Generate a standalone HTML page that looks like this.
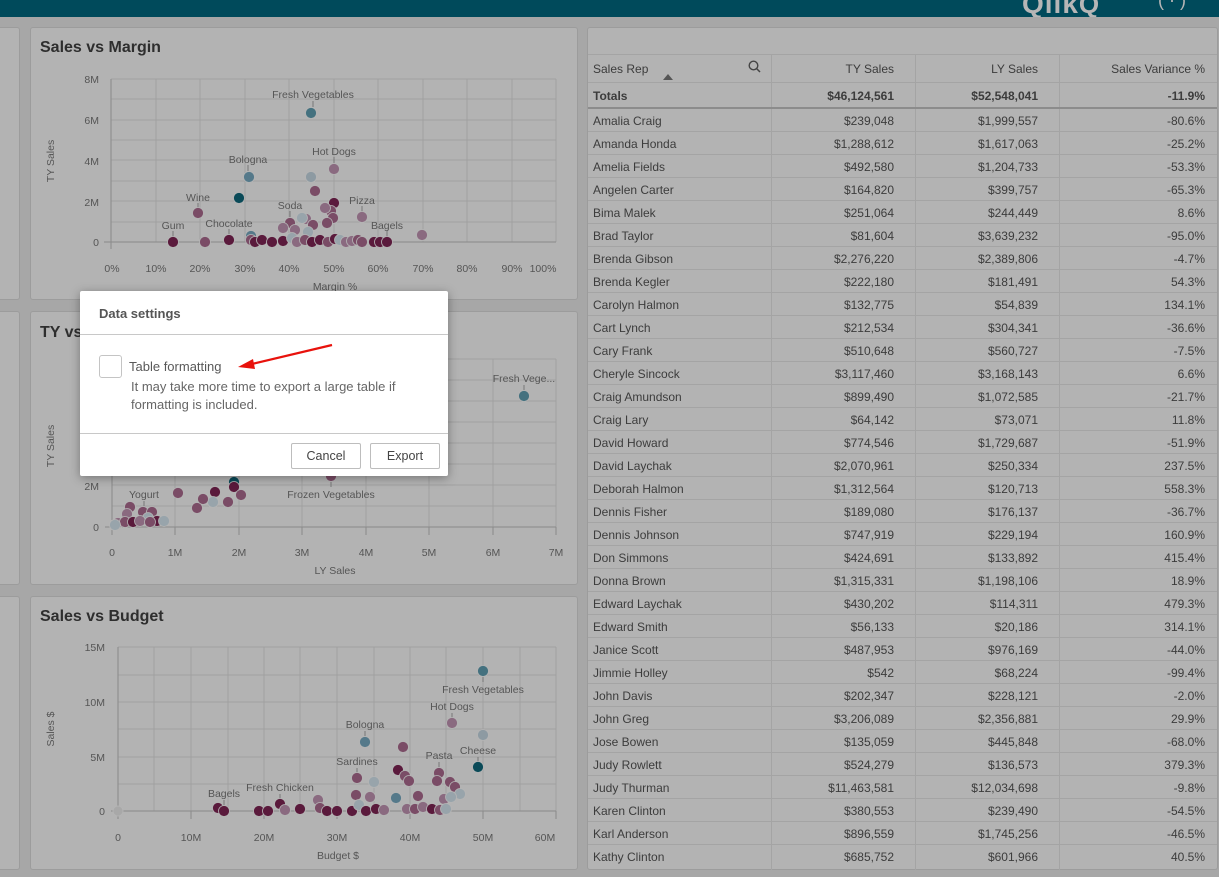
<!DOCTYPE html>
<html><head><meta charset="utf-8"><style>
*{margin:0;padding:0;box-sizing:border-box}
body{width:1219px;height:877px;overflow:hidden;background:#a7a7a7;font-family:"Liberation Sans",sans-serif;position:relative;color:#3a3a3a}
.bar{position:absolute;left:0;top:0;width:1219px;height:17px;background:#004a5b;overflow:hidden}
.card{position:absolute;background:#b3b3b3;border:1px solid #9c9c9c;border-radius:3px}
.title{position:absolute;font-weight:bold;font-size:16px;color:#2e2e2e}
svg text{font-family:"Liberation Sans",sans-serif}
.tbl{position:absolute;left:588px;top:55px;width:629px;font-size:12px;color:#3c3c3c}
.row{position:absolute;left:0;width:629px;height:23px;border-bottom:1px solid #a4a4a4}
.row span{position:absolute;top:5px}
.c1{left:5px}.c2{right:323px}.c3{right:179px}.c4{right:12px}
.vl{position:absolute;top:0;width:1px;background:#a4a4a4;height:815px}
.modal{position:absolute;left:80px;top:291px;width:368px;height:185px;background:#fff;border-radius:2px;box-shadow:0 2px 10px rgba(0,0,0,.35)}
.btn{position:absolute;top:152px;height:26px;border:1px solid #bdbdbd;border-radius:2px;font-size:12.5px;color:#444;text-align:center;line-height:24px;background:#fff}
</style></head><body>
<div class="bar"><div style="position:absolute;left:1022px;top:-12px;font-size:28px;font-weight:bold;color:#b6b6b6;letter-spacing:1px">Qlik<span style="font-size:26px">Q</span></div><div style="position:absolute;left:1158px;top:-10px;font-size:18px;color:#b6b6b6">( · )</div></div>

<div class="card" style="left:-6px;top:27px;width:26px;height:273px"></div>
<div class="card" style="left:-6px;top:311px;width:26px;height:274px"></div>
<div class="card" style="left:-6px;top:596px;width:26px;height:274px"></div>

<!-- Chart 1 -->
<div class="card" style="left:30px;top:27px;width:548px;height:273px"></div>
<div class="title" style="left:40px;top:39px">Sales vs Margin</div>
<svg style="position:absolute;left:0;top:0" width="590" height="300" font-size="10.5" fill="#555">
<g stroke="#a0a0a0" stroke-width="1">
<line x1="111" y1="79" x2="556" y2="79"/><line x1="111" y1="99" x2="556" y2="99"/><line x1="111" y1="120" x2="556" y2="120"/><line x1="111" y1="140" x2="556" y2="140"/><line x1="111" y1="160" x2="556" y2="160"/><line x1="111" y1="181" x2="556" y2="181"/><line x1="111" y1="201" x2="556" y2="201"/><line x1="111" y1="222" x2="556" y2="222"/>
<line x1="156" y1="79" x2="156" y2="242"/><line x1="200" y1="79" x2="200" y2="242"/><line x1="245" y1="79" x2="245" y2="242"/><line x1="289" y1="79" x2="289" y2="242"/><line x1="334" y1="79" x2="334" y2="242"/><line x1="378" y1="79" x2="378" y2="242"/><line x1="423" y1="79" x2="423" y2="242"/><line x1="467" y1="79" x2="467" y2="242"/><line x1="512" y1="79" x2="512" y2="242"/><line x1="556" y1="79" x2="556" y2="242"/>
</g>
<g stroke="#8a8a8a"><line x1="111" y1="79" x2="111" y2="249"/><line x1="104" y1="242" x2="556" y2="242"/></g>
<g text-anchor="end"><text x="99" y="83">8M</text><text x="99" y="124">6M</text><text x="99" y="165">4M</text><text x="99" y="206">2M</text><text x="99" y="246">0</text></g>
<g text-anchor="middle"><text x="112" y="272">0%</text><text x="156" y="272">10%</text><text x="200" y="272">20%</text><text x="245" y="272">30%</text><text x="289" y="272">40%</text><text x="334" y="272">50%</text><text x="378" y="272">60%</text><text x="423" y="272">70%</text><text x="467" y="272">80%</text><text x="512" y="272">90%</text><text x="543" y="272">100%</text>
<text x="335" y="290">Margin %</text>
<text x="313" y="98">Fresh Vegetables</text><text x="248" y="163">Bologna</text><text x="334" y="155">Hot Dogs</text><text x="198" y="201">Wine</text><text x="290" y="209">Soda</text><text x="362" y="204">Pizza</text><text x="173" y="229">Gum</text><text x="229" y="227">Chocolate</text><text x="387" y="229">Bagels</text></g>
<text transform="translate(54,161) rotate(-90)" text-anchor="middle">TY Sales</text>
<g stroke="#777"><line x1="313" y1="101" x2="313" y2="107"/><line x1="248" y1="165" x2="248" y2="171"/><line x1="334" y1="157" x2="334" y2="163"/><line x1="198" y1="203" x2="198" y2="208"/><line x1="290" y1="211" x2="290" y2="217"/><line x1="362" y1="206" x2="362" y2="212"/><line x1="173" y1="231" x2="173" y2="237"/><line x1="229" y1="229" x2="229" y2="234"/><line x1="387" y1="231" x2="387" y2="237"/></g>
<g stroke="#b5b5b5" stroke-width="0.8">
<circle cx="311" cy="113" r="5.5" fill="#44717f"/><circle cx="249" cy="177" r="5.5" fill="#55798a"/><circle cx="239" cy="198" r="5.5" fill="#0a4a58"/><circle cx="334" cy="169" r="5.5" fill="#8a6a80"/><circle cx="311" cy="177" r="5.5" fill="#8d9aa2"/><circle cx="315" cy="191" r="5.5" fill="#7a4c66"/><circle cx="198" cy="213" r="5.5" fill="#7a4c66"/><circle cx="362" cy="217" r="5.5" fill="#8a6a80"/><circle cx="334" cy="203" r="5.5" fill="#5a1a3c"/><circle cx="331" cy="211" r="5.5" fill="#7a4c66"/><circle cx="325" cy="208" r="5.5" fill="#8a6a80"/><circle cx="333" cy="218" r="5.5" fill="#7a4c66"/><circle cx="327" cy="223" r="5.5" fill="#7a4c66"/>
<circle cx="290" cy="223" r="5.5" fill="#7a4c66"/><circle cx="306" cy="219" r="5.5" fill="#8a6a80"/><circle cx="302" cy="218" r="5.5" fill="#98a4ab"/><circle cx="283" cy="228" r="5.5" fill="#8a6a80"/><circle cx="295" cy="230" r="5.5" fill="#8a6a80"/><circle cx="313" cy="225" r="5.5" fill="#7a4c66"/><circle cx="308" cy="232" r="5.5" fill="#98a4ab"/><circle cx="422" cy="235" r="5.5" fill="#8a6a80"/>
<circle cx="173" cy="242" r="5.5" fill="#5a1a3c"/><circle cx="205" cy="242" r="5.5" fill="#7a4c66"/><circle cx="229" cy="240" r="5.5" fill="#5a1a3c"/><circle cx="251" cy="236" r="5.5" fill="#55798a"/><circle cx="251" cy="240" r="5.5" fill="#7a4c66"/><circle cx="255" cy="242" r="5.5" fill="#5a1a3c"/><circle cx="262" cy="240" r="5.5" fill="#5a1a3c"/><circle cx="272" cy="242" r="5.5" fill="#5a1a3c"/><circle cx="283" cy="241" r="5.5" fill="#5a1a3c"/><circle cx="292" cy="238" r="5.5" fill="#98a4ab"/><circle cx="297" cy="242" r="5.5" fill="#8a6a80"/><circle cx="305" cy="240" r="5.5" fill="#7a4c66"/><circle cx="312" cy="242" r="5.5" fill="#5a1a3c"/><circle cx="320" cy="240" r="5.5" fill="#5a1a3c"/><circle cx="328" cy="242" r="5.5" fill="#7a4c66"/><circle cx="335" cy="239" r="5.5" fill="#5a1a3c"/><circle cx="340" cy="240" r="5.5" fill="#98a4ab"/><circle cx="346" cy="242" r="5.5" fill="#8a6a80"/><circle cx="352" cy="241" r="5.5" fill="#8a6a80"/><circle cx="358" cy="240" r="5.5" fill="#7a4c66"/><circle cx="362" cy="242" r="5.5" fill="#7a4c66"/><circle cx="374" cy="242" r="5.5" fill="#5a1a3c"/><circle cx="380" cy="242" r="5.5" fill="#5a1a3c"/><circle cx="387" cy="242" r="5.5" fill="#5a1a3c"/>
</g></svg>

<!-- Chart 2 -->
<div class="card" style="left:30px;top:311px;width:548px;height:274px"></div>
<div class="title" style="left:40px;top:324px">TY vs LY Sales</div>
<svg style="position:absolute;left:0;top:300px" width="590" height="290" font-size="10.5" fill="#555">
<g stroke="#a0a0a0"><line x1="112" y1="59" x2="556" y2="59"/><line x1="112" y1="80" x2="556" y2="80"/><line x1="112" y1="101" x2="556" y2="101"/><line x1="112" y1="122" x2="556" y2="122"/><line x1="112" y1="143" x2="556" y2="143"/><line x1="112" y1="164" x2="556" y2="164"/><line x1="112" y1="185" x2="556" y2="185"/><line x1="112" y1="206" x2="556" y2="206"/>
<line x1="175" y1="59" x2="175" y2="227"/><line x1="239" y1="59" x2="239" y2="227"/><line x1="302" y1="59" x2="302" y2="227"/><line x1="366" y1="59" x2="366" y2="227"/><line x1="429" y1="59" x2="429" y2="227"/><line x1="493" y1="59" x2="493" y2="227"/><line x1="556" y1="59" x2="556" y2="227"/></g>
<g stroke="#8a8a8a"><line x1="112" y1="59" x2="112" y2="235"/><line x1="105" y1="227" x2="556" y2="227"/><line x1="175" y1="227" x2="175" y2="235"/><line x1="239" y1="227" x2="239" y2="235"/><line x1="302" y1="227" x2="302" y2="235"/><line x1="366" y1="227" x2="366" y2="235"/><line x1="429" y1="227" x2="429" y2="235"/><line x1="493" y1="227" x2="493" y2="235"/><line x1="556" y1="227" x2="556" y2="235"/></g>
<g text-anchor="end"><text x="99" y="190">2M</text><text x="99" y="231">0</text></g>
<g text-anchor="middle"><text x="112" y="256">0</text><text x="175" y="256">1M</text><text x="239" y="256">2M</text><text x="302" y="256">3M</text><text x="366" y="256">4M</text><text x="429" y="256">5M</text><text x="493" y="256">6M</text><text x="556" y="256">7M</text><text x="335" y="274">LY Sales</text>
<text x="524" y="82">Fresh Vege...</text><text x="144" y="198">Yogurt</text><text x="331" y="198">Frozen Vegetables</text></g>
<text transform="translate(54,146) rotate(-90)" text-anchor="middle">TY Sales</text>
<g stroke="#777"><line x1="524" y1="85" x2="524" y2="90"/><line x1="144" y1="201" x2="144" y2="206"/><line x1="331" y1="182" x2="331" y2="187"/></g>
<g stroke="#b5b5b5" stroke-width="0.8">
<circle cx="524" cy="96" r="5.5" fill="#44717f"/><circle cx="331" cy="176" r="5.5" fill="#7a4c66"/><circle cx="234" cy="182" r="5.5" fill="#0a4a58"/><circle cx="234" cy="187" r="5.5" fill="#5a1a3c"/><circle cx="241" cy="195" r="5.5" fill="#7a4c66"/><circle cx="178" cy="193" r="5.5" fill="#7a4c66"/><circle cx="215" cy="192" r="5.5" fill="#5a1a3c"/><circle cx="213" cy="202" r="5.5" fill="#98a4ab"/><circle cx="203" cy="199" r="5.5" fill="#7a4c66"/><circle cx="228" cy="202" r="5.5" fill="#7a4c66"/><circle cx="197" cy="208" r="5.5" fill="#7a4c66"/><circle cx="130" cy="207" r="5.5" fill="#7a4c66"/><circle cx="127" cy="214" r="5.5" fill="#8a6a80"/><circle cx="143" cy="212" r="5.5" fill="#7a4c66"/><circle cx="152" cy="212" r="5.5" fill="#7a4c66"/><circle cx="148" cy="218" r="5.5" fill="#98a4ab"/><circle cx="157" cy="221" r="5.5" fill="#5a1a3c"/><circle cx="164" cy="221" r="5.5" fill="#98a4ab"/><circle cx="118" cy="223" r="5.5" fill="#8a6a80"/><circle cx="125" cy="222" r="5.5" fill="#7a4c66"/><circle cx="133" cy="222" r="5.5" fill="#5a1a3c"/><circle cx="140" cy="221" r="5.5" fill="#8a6a80"/><circle cx="150" cy="222" r="5.5" fill="#7a4c66"/><circle cx="115" cy="225" r="5.5" fill="#98a4ab"/></g></svg>

<!-- Chart 3 -->
<div class="card" style="left:30px;top:596px;width:548px;height:274px"></div>
<div class="title" style="left:40px;top:608px">Sales vs Budget</div>
<svg style="position:absolute;left:0;top:590px" width="590" height="287" font-size="10.5" fill="#555">
<g stroke="#a0a0a0"><line x1="118" y1="57" x2="556" y2="57"/><line x1="118" y1="85" x2="556" y2="85"/><line x1="118" y1="112" x2="556" y2="112"/><line x1="118" y1="139" x2="556" y2="139"/><line x1="118" y1="167" x2="556" y2="167"/><line x1="118" y1="194" x2="556" y2="194"/>
<line x1="154" y1="57" x2="154" y2="221"/><line x1="191" y1="57" x2="191" y2="221"/><line x1="228" y1="57" x2="228" y2="221"/><line x1="264" y1="57" x2="264" y2="221"/><line x1="300" y1="57" x2="300" y2="221"/><line x1="337" y1="57" x2="337" y2="221"/><line x1="374" y1="57" x2="374" y2="221"/><line x1="410" y1="57" x2="410" y2="221"/><line x1="446" y1="57" x2="446" y2="221"/><line x1="483" y1="57" x2="483" y2="221"/><line x1="520" y1="57" x2="520" y2="221"/><line x1="556" y1="57" x2="556" y2="221"/></g>
<g stroke="#8a8a8a"><line x1="118" y1="57" x2="118" y2="229"/><line x1="111" y1="221" x2="556" y2="221"/><line x1="191" y1="221" x2="191" y2="229"/><line x1="264" y1="221" x2="264" y2="229"/><line x1="337" y1="221" x2="337" y2="229"/><line x1="410" y1="221" x2="410" y2="229"/><line x1="483" y1="221" x2="483" y2="229"/><line x1="556" y1="221" x2="556" y2="229"/></g>
<g text-anchor="end"><text x="105" y="61">15M</text><text x="105" y="116">10M</text><text x="105" y="171">5M</text><text x="105" y="225">0</text></g>
<g text-anchor="middle"><text x="118" y="251">0</text><text x="191" y="251">10M</text><text x="264" y="251">20M</text><text x="337" y="251">30M</text><text x="410" y="251">40M</text><text x="483" y="251">50M</text><text x="545" y="251">60M</text><text x="338" y="269">Budget $</text>
<text x="483" y="103">Fresh Vegetables</text><text x="452" y="120">Hot Dogs</text><text x="365" y="138">Bologna</text><text x="478" y="164">Cheese</text><text x="439" y="169">Pasta</text><text x="357" y="175">Sardines</text><text x="224" y="207">Bagels</text><text x="280" y="201">Fresh Chicken</text></g>
<text transform="translate(54,139) rotate(-90)" text-anchor="middle">Sales $</text>
<g stroke="#777"><line x1="483" y1="87" x2="483" y2="92"/><line x1="452" y1="123" x2="452" y2="128"/><line x1="365" y1="141" x2="365" y2="146"/><line x1="478" y1="167" x2="478" y2="172"/><line x1="439" y1="172" x2="439" y2="177"/><line x1="357" y1="178" x2="357" y2="183"/><line x1="224" y1="210" x2="224" y2="215"/><line x1="280" y1="204" x2="280" y2="209"/></g>
<g stroke="#b5b5b5" stroke-width="0.8">
<circle cx="483" cy="81" r="5.5" fill="#44717f"/><circle cx="452" cy="133" r="5.5" fill="#8a6a80"/><circle cx="483" cy="145" r="5.5" fill="#8d9aa2"/><circle cx="365" cy="152" r="5.5" fill="#55798a"/><circle cx="403" cy="157" r="5.5" fill="#7a4c66"/><circle cx="478" cy="177" r="5.5" fill="#0a4a58"/><circle cx="439" cy="183" r="5.5" fill="#7a4c66"/><circle cx="357" cy="188" r="5.5" fill="#7a4c66"/><circle cx="374" cy="192" r="5.5" fill="#98a4ab"/><circle cx="398" cy="180" r="5.5" fill="#5a1a3c"/><circle cx="405" cy="186" r="5.5" fill="#7a4c66"/><circle cx="409" cy="191" r="5.5" fill="#7a4c66"/><circle cx="437" cy="191" r="5.5" fill="#7a4c66"/><circle cx="450" cy="192" r="5.5" fill="#7a4c66"/><circle cx="455" cy="197" r="5.5" fill="#7a4c66"/><circle cx="460" cy="204" r="5.5" fill="#98a4ab"/><circle cx="318" cy="210" r="5.5" fill="#8a6a80"/><circle cx="396" cy="208" r="5.5" fill="#55798a"/><circle cx="356" cy="205" r="5.5" fill="#7a4c66"/><circle cx="370" cy="207" r="5.5" fill="#8a6a80"/><circle cx="418" cy="206" r="5.5" fill="#7a4c66"/><circle cx="444" cy="209" r="5.5" fill="#8a6a80"/><circle cx="451" cy="207" r="5.5" fill="#98a4ab"/><circle cx="280" cy="214" r="5.5" fill="#5a1a3c"/>
<circle cx="118" cy="221" r="5" fill="#a8a8a8"/><circle cx="218" cy="218" r="5.5" fill="#5a1a3c"/><circle cx="224" cy="221" r="5.5" fill="#5a1a3c"/><circle cx="259" cy="221" r="5.5" fill="#5a1a3c"/><circle cx="268" cy="221" r="5.5" fill="#5a1a3c"/><circle cx="285" cy="220" r="5.5" fill="#8a6a80"/><circle cx="300" cy="219" r="5.5" fill="#5a1a3c"/><circle cx="320" cy="218" r="5.5" fill="#7a4c66"/><circle cx="327" cy="221" r="5.5" fill="#5a1a3c"/><circle cx="337" cy="221" r="5.5" fill="#5a1a3c"/><circle cx="352" cy="221" r="5.5" fill="#5a1a3c"/><circle cx="359" cy="215" r="5.5" fill="#98a4ab"/><circle cx="366" cy="221" r="5.5" fill="#5a1a3c"/><circle cx="376" cy="219" r="5.5" fill="#5a1a3c"/><circle cx="384" cy="220" r="5.5" fill="#8a6a80"/><circle cx="407" cy="219" r="5.5" fill="#8a6a80"/><circle cx="415" cy="219" r="5.5" fill="#7a4c66"/><circle cx="423" cy="217" r="5.5" fill="#8a6a80"/><circle cx="432" cy="219" r="5.5" fill="#5a1a3c"/><circle cx="440" cy="220" r="5.5" fill="#7a4c66"/><circle cx="446" cy="219" r="5.5" fill="#98a4ab"/></g></svg>

<!-- Table -->
<div class="card" style="left:587px;top:27px;width:631px;height:843px;border-radius:3px"></div>
<div class="tbl">
<div style="position:absolute;left:0;top:-1px;width:629px;border-top:1px solid #a4a4a4"></div>
<div class="vl" style="left:183px"></div><div class="vl" style="left:327px"></div><div class="vl" style="left:471px"></div>
<div class="row" style="top:0;height:28px"><span class="c1" style="top:7px">Sales Rep</span><span style="left:160px;top:5px"><svg width="14" height="14"><circle cx="5.5" cy="5.5" r="4.3" fill="none" stroke="#444" stroke-width="1.4"/><line x1="8.5" y1="8.5" x2="12" y2="12" stroke="#444" stroke-width="1.5"/></svg></span><span style="left:75px;top:19px;width:0;height:0;border-left:5px solid transparent;border-right:5px solid transparent;border-bottom:6px solid #555"></span><span class="c2" style="top:7px">TY Sales</span><span class="c3" style="top:7px">LY Sales</span><span class="c4" style="top:7px">Sales Variance %</span></div>
<div class="row" style="top:28px;height:26px;font-weight:bold;border-bottom:2px solid #8c8c8c"><span class="c1" style="top:6px">Totals</span><span class="c2" style="top:6px">$46,124,561</span><span class="c3" style="top:6px">$52,548,041</span><span class="c4" style="top:6px">-11.9%</span></div>
<div class="row" style="top:54px"><span class="c1">Amalia Craig</span><span class="c2">$239,048</span><span class="c3">$1,999,557</span><span class="c4">-80.6%</span></div>
<div class="row" style="top:77px"><span class="c1">Amanda Honda</span><span class="c2">$1,288,612</span><span class="c3">$1,617,063</span><span class="c4">-25.2%</span></div>
<div class="row" style="top:100px"><span class="c1">Amelia Fields</span><span class="c2">$492,580</span><span class="c3">$1,204,733</span><span class="c4">-53.3%</span></div>
<div class="row" style="top:123px"><span class="c1">Angelen Carter</span><span class="c2">$164,820</span><span class="c3">$399,757</span><span class="c4">-65.3%</span></div>
<div class="row" style="top:146px"><span class="c1">Bima Malek</span><span class="c2">$251,064</span><span class="c3">$244,449</span><span class="c4">8.6%</span></div>
<div class="row" style="top:169px"><span class="c1">Brad Taylor</span><span class="c2">$81,604</span><span class="c3">$3,639,232</span><span class="c4">-95.0%</span></div>
<div class="row" style="top:192px"><span class="c1">Brenda Gibson</span><span class="c2">$2,276,220</span><span class="c3">$2,389,806</span><span class="c4">-4.7%</span></div>
<div class="row" style="top:215px"><span class="c1">Brenda Kegler</span><span class="c2">$222,180</span><span class="c3">$181,491</span><span class="c4">54.3%</span></div>
<div class="row" style="top:238px"><span class="c1">Carolyn Halmon</span><span class="c2">$132,775</span><span class="c3">$54,839</span><span class="c4">134.1%</span></div>
<div class="row" style="top:261px"><span class="c1">Cart Lynch</span><span class="c2">$212,534</span><span class="c3">$304,341</span><span class="c4">-36.6%</span></div>
<div class="row" style="top:284px"><span class="c1">Cary Frank</span><span class="c2">$510,648</span><span class="c3">$560,727</span><span class="c4">-7.5%</span></div>
<div class="row" style="top:307px"><span class="c1">Cheryle Sincock</span><span class="c2">$3,117,460</span><span class="c3">$3,168,143</span><span class="c4">6.6%</span></div>
<div class="row" style="top:330px"><span class="c1">Craig Amundson</span><span class="c2">$899,490</span><span class="c3">$1,072,585</span><span class="c4">-21.7%</span></div>
<div class="row" style="top:353px"><span class="c1">Craig Lary</span><span class="c2">$64,142</span><span class="c3">$73,071</span><span class="c4">11.8%</span></div>
<div class="row" style="top:376px"><span class="c1">David Howard</span><span class="c2">$774,546</span><span class="c3">$1,729,687</span><span class="c4">-51.9%</span></div>
<div class="row" style="top:399px"><span class="c1">David Laychak</span><span class="c2">$2,070,961</span><span class="c3">$250,334</span><span class="c4">237.5%</span></div>
<div class="row" style="top:422px"><span class="c1">Deborah Halmon</span><span class="c2">$1,312,564</span><span class="c3">$120,713</span><span class="c4">558.3%</span></div>
<div class="row" style="top:445px"><span class="c1">Dennis Fisher</span><span class="c2">$189,080</span><span class="c3">$176,137</span><span class="c4">-36.7%</span></div>
<div class="row" style="top:468px"><span class="c1">Dennis Johnson</span><span class="c2">$747,919</span><span class="c3">$229,194</span><span class="c4">160.9%</span></div>
<div class="row" style="top:491px"><span class="c1">Don Simmons</span><span class="c2">$424,691</span><span class="c3">$133,892</span><span class="c4">415.4%</span></div>
<div class="row" style="top:514px"><span class="c1">Donna Brown</span><span class="c2">$1,315,331</span><span class="c3">$1,198,106</span><span class="c4">18.9%</span></div>
<div class="row" style="top:537px"><span class="c1">Edward Laychak</span><span class="c2">$430,202</span><span class="c3">$114,311</span><span class="c4">479.3%</span></div>
<div class="row" style="top:560px"><span class="c1">Edward Smith</span><span class="c2">$56,133</span><span class="c3">$20,186</span><span class="c4">314.1%</span></div>
<div class="row" style="top:583px"><span class="c1">Janice Scott</span><span class="c2">$487,953</span><span class="c3">$976,169</span><span class="c4">-44.0%</span></div>
<div class="row" style="top:606px"><span class="c1">Jimmie Holley</span><span class="c2">$542</span><span class="c3">$68,224</span><span class="c4">-99.4%</span></div>
<div class="row" style="top:629px"><span class="c1">John Davis</span><span class="c2">$202,347</span><span class="c3">$228,121</span><span class="c4">-2.0%</span></div>
<div class="row" style="top:652px"><span class="c1">John Greg</span><span class="c2">$3,206,089</span><span class="c3">$2,356,881</span><span class="c4">29.9%</span></div>
<div class="row" style="top:675px"><span class="c1">Jose Bowen</span><span class="c2">$135,059</span><span class="c3">$445,848</span><span class="c4">-68.0%</span></div>
<div class="row" style="top:698px"><span class="c1">Judy Rowlett</span><span class="c2">$524,279</span><span class="c3">$136,573</span><span class="c4">379.3%</span></div>
<div class="row" style="top:721px"><span class="c1">Judy Thurman</span><span class="c2">$11,463,581</span><span class="c3">$12,034,698</span><span class="c4">-9.8%</span></div>
<div class="row" style="top:744px"><span class="c1">Karen Clinton</span><span class="c2">$380,553</span><span class="c3">$239,490</span><span class="c4">-54.5%</span></div>
<div class="row" style="top:767px"><span class="c1">Karl Anderson</span><span class="c2">$896,559</span><span class="c3">$1,745,256</span><span class="c4">-46.5%</span></div>
<div class="row" style="top:790px;border-bottom:none"><span class="c1">Kathy Clinton</span><span class="c2">$685,752</span><span class="c3">$601,966</span><span class="c4">40.5%</span></div>
</div>

<!-- Modal -->
<div class="modal">
<div style="position:absolute;left:19px;top:15px;font-size:13px;font-weight:bold;color:#555">Data settings</div>
<div style="position:absolute;left:0;top:43px;width:368px;border-top:1px solid #c8c8c8"></div>
<div style="position:absolute;left:19px;top:64px;width:23px;height:23px;border:1px solid #c4c4c4;border-radius:3px"></div>
<div style="position:absolute;left:49px;top:68px;font-size:13px;color:#595959">Table formatting</div>
<div style="position:absolute;left:51px;top:87px;width:300px;font-size:13px;line-height:18px;color:#666">It may take more time to export a large table if formatting is included.</div>
<div style="position:absolute;left:0;top:142px;width:368px;border-top:1px solid #c8c8c8"></div>
<div class="btn" style="left:211px;width:70px">Cancel</div>
<div class="btn" style="left:290px;width:70px">Export</div>
</div>
<svg style="position:absolute;left:0;top:0" width="1219" height="877"><line x1="332" y1="345" x2="252" y2="364" stroke="#e8120c" stroke-width="2.2"/><polygon points="238,367 253,359 255,369" fill="#e8120c"/></svg>
</body></html>
